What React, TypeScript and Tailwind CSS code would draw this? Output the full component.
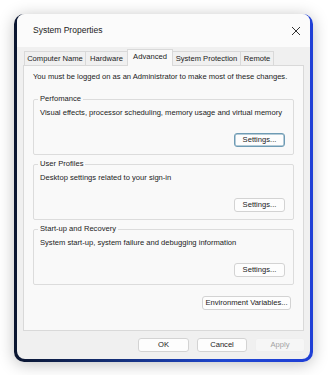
import React from "react";

const font = { fontFamily: '"Liberation Sans", Arial, sans-serif' };

function Btn({ label, w, focus, disabled }: { label: string; w: string; focus?: boolean; disabled?: boolean }) {
  const base = "h-[14px] flex items-center justify-center rounded-[3px] text-[7.6px] leading-none border ";
  const cls = disabled
    ? "bg-[#f6f6f6] border-[#efefef] text-[#a3a3a3]"
    : focus
    ? "bg-[#fdfdfd] border-[#6e9bb4] text-[#1b1b1b] shadow-[inset_0_0_0_0.5px_#6e9bb4]"
    : "bg-[#fdfdfd] border-[#d3d3d3] text-[#1b1b1b]";
  return <div className={base + cls + " " + w}>{label}</div>;
}

function Group({ title, text, focus, mt }: { title: string; text: string; focus?: boolean; mt: string }) {
  return (
    <div className={"relative ml-[9px] w-[261px] border border-[#dcdcdc] rounded-[2px] pt-[8px] pb-[7px] " + mt}>
      <div className="absolute -top-[6px] left-[4px] bg-[#f9f9f9] px-[2px] text-[7.6px] leading-[10px] text-[#1b1b1b]">
        {title}
      </div>
      <div className="pl-[6px] text-[7.6px] leading-[10px] text-[#1b1b1b]">{text}</div>
      <div className="flex justify-end pr-[8px] mt-[15px]">
        <Btn label="Settings..." w="w-[51px]" focus={focus} />
      </div>
    </div>
  );
}

export default function App() {
  const tabs = [
    { l: "Computer Name", w: "w-[61px]" },
    { l: "Hardware", w: "w-[42px]" },
  ];
  return (
    <div className="w-[328px] h-[375px] bg-white overflow-hidden" style={font}>
      <div className="ml-[14px] mt-[14px] w-[299px] h-[348px] rounded-[10px] shadow-[0_2px_16px_rgba(0,0,0,0.25)] bg-[linear-gradient(90deg,#0b1630_0%,#15307a_35%,#1f46d0_70%,#1f3fd6_100%)] pl-[3px] pr-[3px] pb-[3px]">
        <div className="w-[293px] h-[345px] rounded-[8px] bg-[#f0f0f0] overflow-hidden flex flex-col">
          {/* Title bar */}
          <div className="h-[33px] bg-[#fbfbfb] flex items-center justify-between pl-[16px] pr-[6px] shrink-0">
            <span className="text-[8.5px] text-[#222]">System Properties</span>
            <svg width="14" height="14" viewBox="0 0 14 14" className="mr-[1px]">
              <path d="M3 3 L11 11 M11 3 L3 11" stroke="#333" strokeWidth="1" />
            </svg>
          </div>
          {/* Tabs */}
          <div className="h-[18px] flex items-end pl-[7px] shrink-0">
            {tabs.map((t) => (
              <div
                key={t.l}
                className={"h-[14px] flex items-center justify-center border border-b-0 border-r-0 border-[#d9d9d9] bg-[#f0f0f0] text-[7.6px] text-[#1b1b1b] " + t.w}
              >
                {t.l}
              </div>
            ))}
            <div className="h-[17px] w-[46px] -mb-[1px] relative z-10 flex items-center justify-center border border-b-0 border-[#d9d9d9] bg-[#f9f9f9] text-[7.6px] text-[#1b1b1b] pb-[2px]">
              Advanced
            </div>
            <div className="h-[14px] w-[68px] flex items-center justify-center border border-b-0 border-l-0 border-[#d9d9d9] bg-[#f0f0f0] text-[7.6px] text-[#1b1b1b]">
              System Protection
            </div>
            <div className="h-[14px] w-[33px] flex items-center justify-center border border-b-0 border-l-0 border-[#d9d9d9] bg-[#f0f0f0] text-[7.6px] text-[#1b1b1b]">
              Remote
            </div>
          </div>
          {/* Panel */}
          <div className="ml-[6px] w-[281px] h-[266px] bg-[#f9f9f9] border border-[#d9d9d9] pt-[6px] shrink-0">
            <div className="pl-[9px] text-[7.6px] leading-[10px] text-[#1b1b1b]">
              You must be logged on as an Administrator to make most of these changes.
            </div>
            <Group
              mt="mt-[17px]"
              title="Perfomance"
              text="Visual effects, processor scheduling, memory usage and virtual memory"
              focus
            />
            <Group mt="mt-[9px]" title="User Profiles" text="Desktop settings related to your sign-in" />
            <Group
              mt="mt-[9px]"
              title="Start-up and Recovery"
              text="System start-up, system failure and debugging information"
            />
            <div className="flex justify-end pr-[12px] mt-[11px]">
              <Btn label="Environment Variables..." w="w-[89px]" />
            </div>
          </div>
          {/* Bottom buttons */}
          <div className="flex justify-end gap-[8px] pr-[5px] mt-[7px]">
            <Btn label="OK" w="w-[51px]" />
            <Btn label="Cancel" w="w-[50px]" />
            <Btn label="Apply" w="w-[50px]" disabled />
          </div>
        </div>
      </div>
    </div>
  );
}
